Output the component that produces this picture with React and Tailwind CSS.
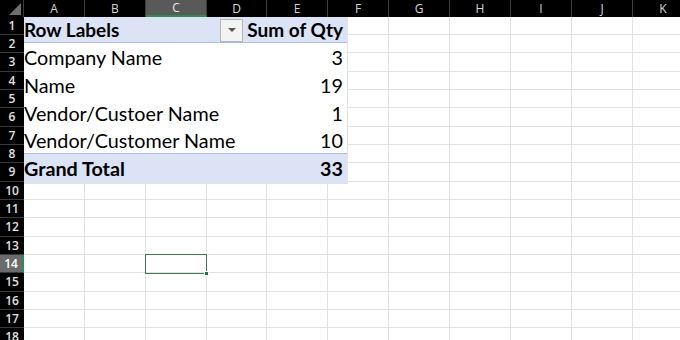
import React from "react";

const cols = [
  { l: "A", w: "w-[61px]" },
  { l: "B", w: "w-[61px]" },
  { l: "C", w: "w-[61px]" },
  { l: "D", w: "w-[60px]" },
  { l: "E", w: "w-[61px]" },
  { l: "F", w: "w-[61px]" },
  { l: "G", w: "w-[61px]" },
  { l: "H", w: "w-[61px]" },
  { l: "I", w: "w-[61px]" },
  { l: "J", w: "w-[61px]" },
  { l: "K", w: "w-[61px]" },
];

const rows = Array.from({ length: 18 }, (_, i) => i + 1);
const rowH = (n) => (n % 3 === 0 ? "h-[19px]" : "h-[18px]");

const pivot = [
  { label: "Company Name", qty: 3, h: "h-[28px]" },
  { label: "Name", qty: 19, h: "h-[28px]" },
  { label: "Vendor/Custoer Name", qty: 1, h: "h-[27px]" },
  { label: "Vendor/Customer Name", qty: 10, h: "h-[27px]" },
];

export default function App() {
  return (
    <div className="w-[680px] h-[340px] overflow-hidden bg-white font-['Lato',sans-serif]">
      {/* column headers */}
      <div className="flex h-[17px] bg-black">
        <div className="w-[24px] shrink-0 relative border-r border-[#3a3a3a]">
          <div className="absolute right-[2px] bottom-[2px] w-0 h-0 border-l-[12px] border-l-transparent border-b-[12px] border-b-[#6e6e6e]" />
        </div>
        {cols.map((c) => (
          <div
            key={c.l}
            className={`${c.w} shrink-0 flex items-center justify-center text-[12px] leading-none text-[#d6d6d6] font-['Open_Sans',sans-serif] border-r border-[#3a3a3a] ${
              c.l === "C" ? "bg-[#595959] border-b-2 border-b-[#2e8b57] text-[#e8e8e8]" : ""
            }`}
          >
            {c.l}
          </div>
        ))}
      </div>

      <div className="flex">
        {/* row headers */}
        <div className="w-[24px] shrink-0 bg-black">
          {rows.map((n) => (
            <div
              key={n}
              className={`${rowH(n)} flex items-center justify-center text-[12px] leading-none font-semibold font-['Open_Sans',sans-serif] border-b border-[#3a3a3a] ${
                n === 14 ? "bg-[#6b6b6b] text-white border-r-2 border-r-[#2e8b57]" : "text-[#e0e0e0]"
              }`}
            >
              {n}
            </div>
          ))}
        </div>

        {/* grid */}
        <div className="relative flex-1">
          {rows.map((n) => (
            <div key={n} className={`${rowH(n)} flex`}>
              {cols.map((c) => (
                <div key={c.l} className={`${c.w} shrink-0 border-r border-b border-[#e2e2e2]`} />
              ))}
            </div>
          ))}

          {/* pivot table */}
          <div className="absolute left-0 top-0 w-[324px] bg-white text-[19.75px] text-black border-r border-b border-[#e2e2e2]">
            <div className="flex h-[26px] bg-[#dbe3f4] border-b border-[#a9bde6] font-bold text-[19px]">
              <div className="w-[219px] flex items-center justify-between">
                <span className="leading-none">Row Labels</span>
                <span className="w-[23px] h-[23px] mt-[1px] bg-[#f3f3f3] border border-[#b5b5b5] flex items-center justify-center">
                  <span className="w-0 h-0 border-l-[4px] border-r-[4px] border-t-[4px] border-l-transparent border-r-transparent border-t-[#555]" />
                </span>
              </div>
              <div className="flex-1 flex items-center justify-end pr-[4px] leading-none">Sum of Qty</div>
            </div>
            {pivot.map((r) => (
              <div key={r.label} className={`flex ${r.h}`}>
                <div className="w-[219px] flex items-center pt-[2px] leading-none">{r.label}</div>
                <div className="flex-1 flex items-center justify-end pt-[2px] pr-[4px] leading-none">{r.qty}</div>
              </div>
            ))}
            <div className="flex h-[30px] bg-[#dbe3f4] border-t border-[#a9bde6] font-bold">
              <div className="w-[219px] flex items-center leading-none">Grand Total</div>
              <div className="flex-1 flex items-center justify-end pr-[4px] leading-none">33</div>
            </div>
          </div>

          {/* selected cell C14 */}
          <div className="absolute left-[121px] top-[237px] w-[62px] h-[20px] border border-[#3f7a52]">
            <div className="absolute right-[-3px] bottom-[-3px] w-[5px] h-[5px] bg-[#107c41] border border-white" />
          </div>
        </div>
      </div>
    </div>
  );
}
